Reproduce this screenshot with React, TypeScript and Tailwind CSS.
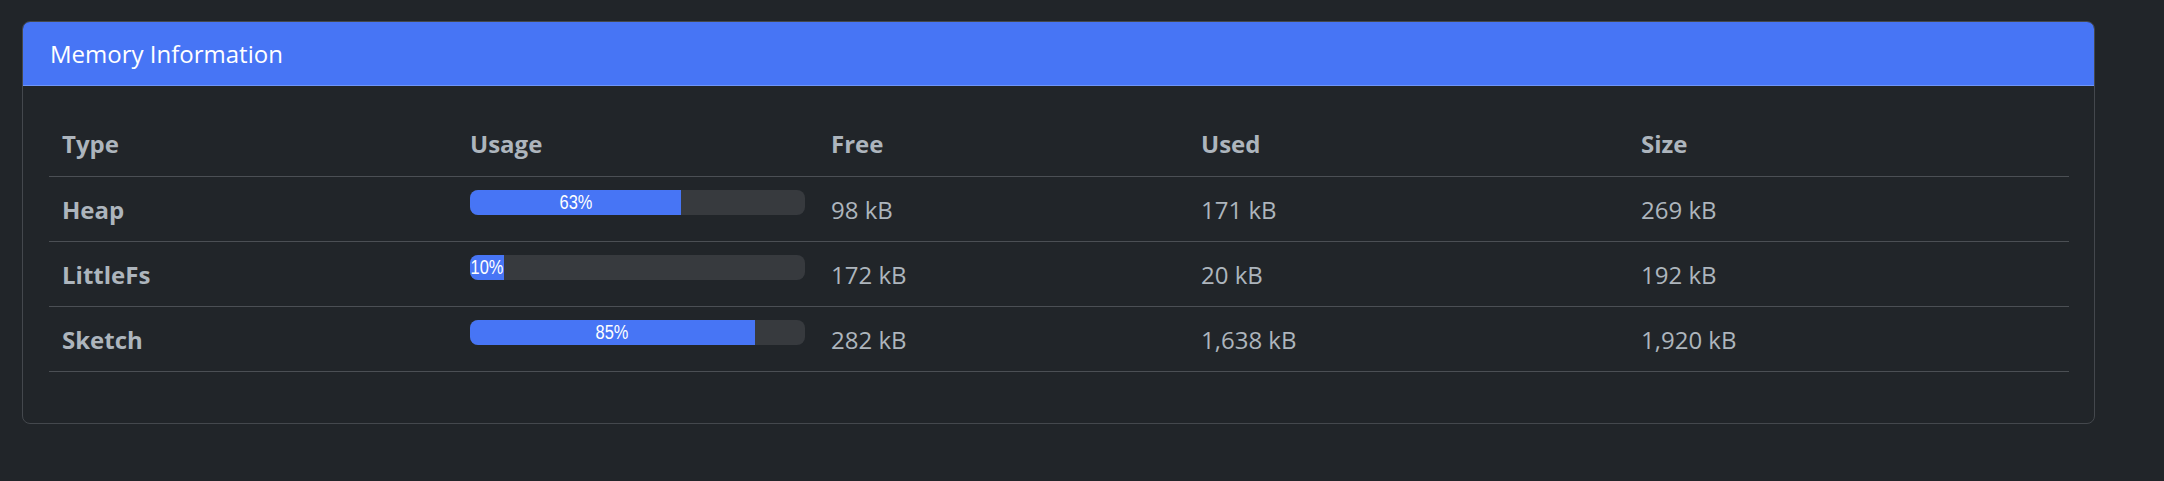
import React from "react";

const rows = [
  { type: "Heap", pct: 63, free: "98 kB", used: "171 kB", size: "269 kB" },
  { type: "LittleFs", pct: 10, free: "172 kB", used: "20 kB", size: "192 kB" },
  { type: "Sketch", pct: 85, free: "282 kB", used: "1,638 kB", size: "1,920 kB" },
];

function Bar({ pct }: { pct: number }) {
  return (
    <div className="flex h-[25px] w-full rounded-[8px] bg-[#373a3e]">
      <div
        className="flex items-center justify-center whitespace-nowrap rounded-l-[8px] bg-[#4775f5] text-[20px] leading-none text-white [font-family:'Liberation_Sans',Arial,sans-serif]"
        style={{ width: `${pct}%` }}
      >
        <span className="inline-block scale-x-[0.82]">{pct}%</span>
      </div>
    </div>
  );
}

export default function App() {
  return (
    <div className="min-h-[481px] w-full bg-[#212529] pt-[21px] pl-[22px] [font-family:'Open_Sans',sans-serif]">
      <div className="w-[2073px] overflow-hidden rounded-[8px] border border-[#44484d]">
        <div className="flex h-[64px] items-center border-b border-[#7096f7] bg-[#4775f5] pl-[27px] text-[24px] text-white">
          Memory Information
        </div>
        <div className="pt-[26px] pb-[51px] pl-[26px] pr-[24px]">
          <table className="w-[2020px] table-fixed border-collapse text-[24px] text-[#adb5bd]">
            <colgroup>
              <col className="w-[408px]" />
              <col className="w-[361px]" />
              <col className="w-[370px]" />
              <col className="w-[440px]" />
              <col className="w-[441px]" />
            </colgroup>
            <thead>
              <tr className="border-b border-[#4b4f54]">
                {["Type", "Usage", "Free", "Used", "Size"].map((h) => (
                  <th
                    key={h}
                    className="h-[64px] px-[13px] py-0 text-left align-middle font-bold leading-[38px]"
                  >
                    {h}
                  </th>
                ))}
              </tr>
            </thead>
            <tbody>
              {rows.map((r) => (
                <tr key={r.type} className="border-b border-[#4b4f54]">
                  <th className="px-[13px] pt-[14px] pb-[12px] text-left align-top font-bold leading-[38px]">
                    {r.type}
                  </th>
                  <td className="px-[13px] pt-[13px] pb-[13px] align-top leading-[38px]">
                    <Bar pct={r.pct} />
                  </td>
                  <td className="px-[13px] pt-[14px] pb-[12px] align-top leading-[38px]">{r.free}</td>
                  <td className="px-[13px] pt-[14px] pb-[12px] align-top leading-[38px]">{r.used}</td>
                  <td className="px-[13px] pt-[14px] pb-[12px] align-top leading-[38px]">{r.size}</td>
                </tr>
              ))}
            </tbody>
          </table>
        </div>
      </div>
    </div>
  );
}
